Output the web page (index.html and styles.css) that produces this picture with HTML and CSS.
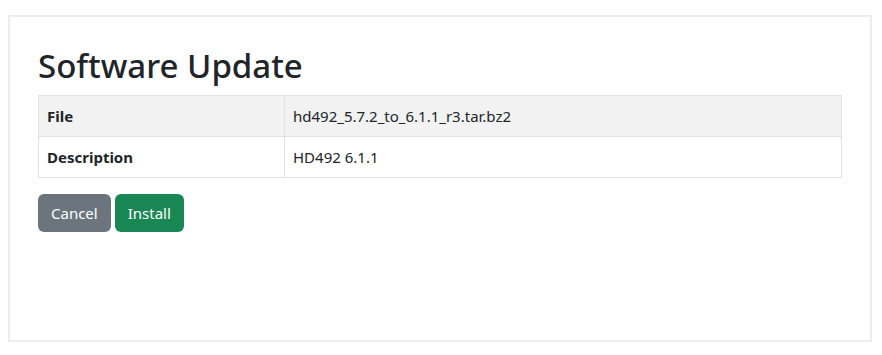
FILE: index.html
```html
<!DOCTYPE html>
<html>
<head>
<meta charset="utf-8">
<link rel="stylesheet" href="styles.css">
</head>
<body>
<div class="frame">
  <h1 class="title">Software Update</h1>
  <table class="info">
    <tr class="striped">
      <th class="key">File</th>
      <td class="val">hd492_5.7.2_to_6.1.1_r3.tar.bz2</td>
    </tr>
    <tr>
      <th class="key">Description</th>
      <td class="val">HD492 6.1.1</td>
    </tr>
  </table>
  <div class="actions">
    <button class="btn btn-cancel">Cancel</button>
    <button class="btn btn-install">Install</button>
  </div>
</div>
</body>
</html>
```
FILE: styles.css
```css
html, body {
  height: 100%;
}
body {
  margin: 0;
  padding: 15px 10px 13px 8px;
  box-sizing: border-box;
  font-family: "Noto Sans", "Open Sans", sans-serif;
  font-size: 15px;
  color: #212529;
  background: #fff;
}
.frame {
  height: 100%;
  box-sizing: border-box;
  border: 2px solid #ececec;
  padding: 28px;
}
.title {
  margin: 0 0 8px 0;
  font-size: 33px;
  font-weight: 500;
  line-height: 42px;
  color: #212529;
}
.info {
  width: 100%;
  border-collapse: collapse;
  margin-bottom: 16px;
}
.info th, .info td {
  border: 1px solid #dee2e6;
  padding: 8px;
  text-align: left;
  line-height: 24px;
  vertical-align: top;
}
.key {
  width: 229px;
  font-weight: 700;
}
.striped th, .striped td {
  background: #f2f2f2;
}
.actions {
  display: flex;
  gap: 4px;
}
.btn {
  font-family: inherit;
  font-size: 15px;
  line-height: 24px;
  padding: 6px 12px;
  border: 1px solid transparent;
  border-radius: 6px;
  color: #fff;
}
.btn-cancel {
  background: #6c757d;
}
.btn-install {
  background: #198754;
}
```
